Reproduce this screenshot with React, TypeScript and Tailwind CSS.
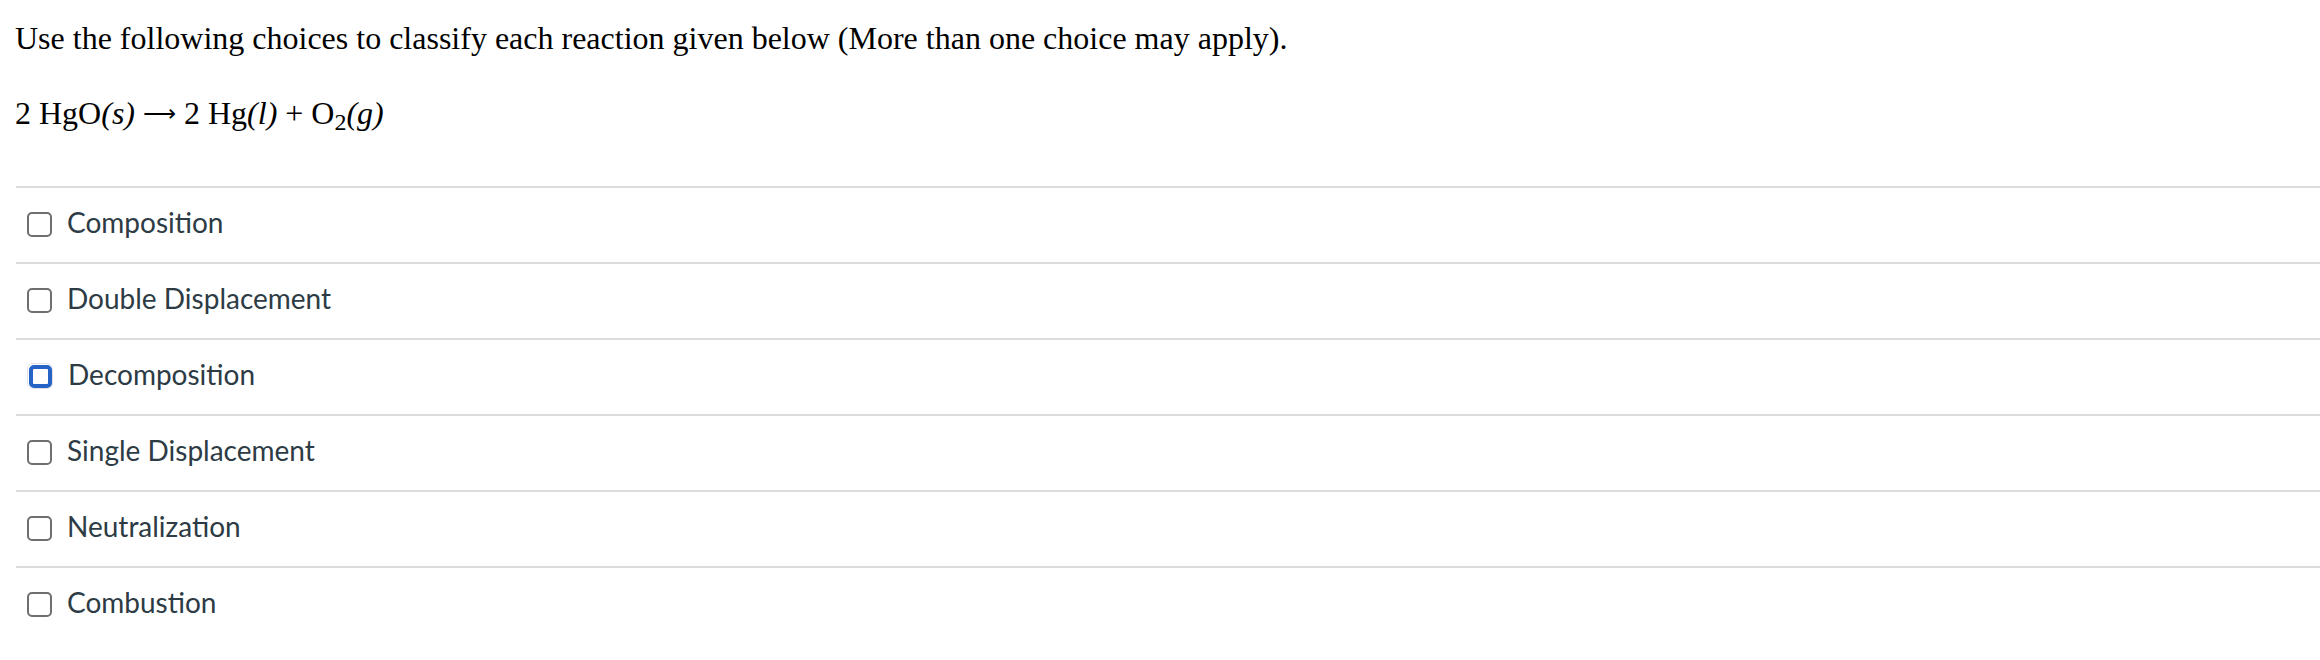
const choices = [
  { label: "Composition", checked: false },
  { label: "Double Displacement", checked: false },
  { label: "Decomposition", checked: true },
  { label: "Single Displacement", checked: false },
  { label: "Neutralization", checked: false },
  { label: "Combustion", checked: false },
];

function Box({ checked }: { checked: boolean }) {
  if (checked) {
    return (
      <span className="mb-[2px] ml-[11px] flex h-[26px] w-[26px] shrink-0 items-center justify-center rounded-[6px] border border-[#e2e2e2]">
        <span className="block h-[23px] w-[23px] rounded-[5px] border-[4px] border-[#2563c7]" />
      </span>
    );
  }
  return <span className="mb-[2px] ml-[11px] block h-[25px] w-[25px] shrink-0 rounded-[5px] border-2 border-[#6f6f6f]" />;
}

export default function App() {
  return (
    <div className="min-h-[660px] bg-white pl-[15px]">
      <div className="pt-[14px] font-['Liberation_Serif',serif] text-[32px] leading-[48px] text-black">
        <p>Use the following choices to classify each reaction given below (More than one choice may apply).</p>
        <p className="mt-[27px]">
          2 HgO<i>(s)</i>{" "}
          <span className="align-[3px] font-['DejaVu_Sans',sans-serif] text-[23px] leading-none">⟶</span> 2 Hg<i>(l)</i> + O<sub>2</sub><i>(g)</i>
        </p>
      </div>
      <ul className="ml-px mt-[49px] font-['Lato',sans-serif] text-[28px] text-[#2d3b45]">
        {choices.map(c => (
          <li key={c.label} className="flex h-[76px] items-center border-t-2 border-[#dcdcdc]">
            <Box checked={c.checked} />
            <span className="mb-[6px] ml-[15px]">{c.label}</span>
          </li>
        ))}
      </ul>
    </div>
  );
}
